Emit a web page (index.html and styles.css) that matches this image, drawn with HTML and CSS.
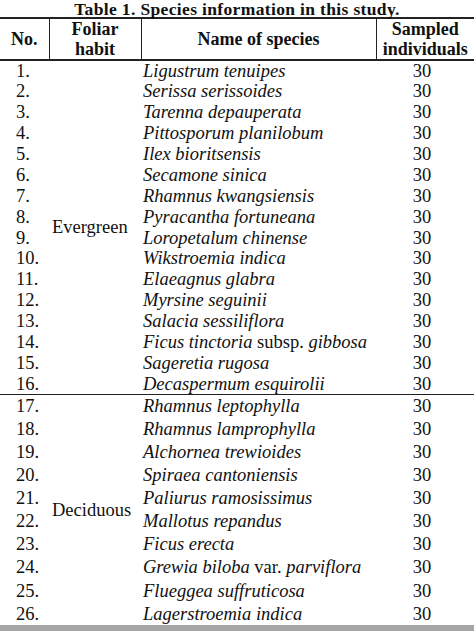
FILE: index.html
```html
<!DOCTYPE html>
<html>
<head>
<meta charset="utf-8">
<link rel="stylesheet" href="styles.css">
</head>
<body>
<div class="page">
  <div class="title">Table 1. Species information in this study.</div>
  <table class="tbl">
    <colgroup>
      <col class="c1"><col class="c2"><col class="c3"><col class="c4">
    </colgroup>
    <thead>
      <tr>
        <th class="h-no">No.</th>
        <th>Foliar<br>habit</th>
        <th>Name of species</th>
        <th class="h-last">Sampled<br>individuals</th>
      </tr>
    </thead>
    <tbody class="ever">
      <tr><td class="no">1.</td><td class="habit" rowspan="16">Evergreen</td><td class="sp"><i>Ligustrum tenuipes</i></td><td class="n">30</td></tr>
      <tr><td class="no">2.</td><td class="sp"><i>Serissa serissoides</i></td><td class="n">30</td></tr>
      <tr><td class="no">3.</td><td class="sp"><i>Tarenna depauperata</i></td><td class="n">30</td></tr>
      <tr><td class="no">4.</td><td class="sp"><i>Pittosporum planilobum</i></td><td class="n">30</td></tr>
      <tr><td class="no">5.</td><td class="sp"><i>Ilex bioritsensis</i></td><td class="n">30</td></tr>
      <tr><td class="no">6.</td><td class="sp"><i>Secamone sinica</i></td><td class="n">30</td></tr>
      <tr><td class="no">7.</td><td class="sp"><i>Rhamnus kwangsiensis</i></td><td class="n">30</td></tr>
      <tr><td class="no">8.</td><td class="sp"><i>Pyracantha fortuneana</i></td><td class="n">30</td></tr>
      <tr><td class="no">9.</td><td class="sp"><i>Loropetalum chinense</i></td><td class="n">30</td></tr>
      <tr><td class="no">10.</td><td class="sp"><i>Wikstroemia indica</i></td><td class="n">30</td></tr>
      <tr><td class="no">11.</td><td class="sp"><i>Elaeagnus glabra</i></td><td class="n">30</td></tr>
      <tr><td class="no">12.</td><td class="sp"><i>Myrsine seguinii</i></td><td class="n">30</td></tr>
      <tr><td class="no">13.</td><td class="sp"><i>Salacia sessiliflora</i></td><td class="n">30</td></tr>
      <tr><td class="no">14.</td><td class="sp"><i>Ficus tinctoria</i> subsp. <i>gibbosa</i></td><td class="n">30</td></tr>
      <tr><td class="no">15.</td><td class="sp"><i>Sageretia rugosa</i></td><td class="n">30</td></tr>
      <tr><td class="no">16.</td><td class="sp"><i>Decaspermum esquirolii</i></td><td class="n">30</td></tr>
    </tbody>
    <tbody class="deci">
      <tr><td class="no">17.</td><td class="habit" rowspan="10">Deciduous</td><td class="sp"><i>Rhamnus leptophylla</i></td><td class="n">30</td></tr>
      <tr><td class="no">18.</td><td class="sp"><i>Rhamnus lamprophylla</i></td><td class="n">30</td></tr>
      <tr><td class="no">19.</td><td class="sp"><i>Alchornea trewioides</i></td><td class="n">30</td></tr>
      <tr><td class="no">20.</td><td class="sp"><i>Spiraea cantoniensis</i></td><td class="n">30</td></tr>
      <tr><td class="no">21.</td><td class="sp"><i>Paliurus ramosissimus</i></td><td class="n">30</td></tr>
      <tr><td class="no">22.</td><td class="sp"><i>Mallotus repandus</i></td><td class="n">30</td></tr>
      <tr><td class="no">23.</td><td class="sp"><i>Ficus erecta</i></td><td class="n">30</td></tr>
      <tr><td class="no">24.</td><td class="sp"><i>Grewia biloba</i> var. <i>parviflora</i></td><td class="n">30</td></tr>
      <tr><td class="no">25.</td><td class="sp"><i>Flueggea suffruticosa</i></td><td class="n">30</td></tr>
      <tr><td class="no">26.</td><td class="sp"><i>Lagerstroemia indica</i></td><td class="n">30</td></tr>
    </tbody>
  </table>
  <div class="bottom-bar"></div>
</div>
</body>
</html>
```
FILE: styles.css
```css
html, body {
  margin: 0;
  padding: 0;
  background: #ffffff;
}
body {
  font-family: "Liberation Serif", "Times New Roman", serif;
  color: #111111;
  width: 474px;
  height: 631px;
  overflow: hidden;
}
.page {
  width: 474px;
}
.title {
  font-weight: bold;
  font-size: 17.5px;
  line-height: 19px;
  height: 17px;
  text-align: center;
  letter-spacing: 0.35px;
}
.tbl {
  width: 474px;
  border-collapse: collapse;
  table-layout: fixed;
  font-size: 18.5px;
}
.c1 { width: 49px; }
.c2 { width: 92px; }
.c3 { width: 235px; }
.c4 { width: 98px; }
.tbl th {
  font-weight: bold;
  font-size: 18px;
  line-height: 20px;
  height: 39px;
  padding: 0;
  text-align: center;
  vertical-align: middle;
  border-top: 2px solid #222222;
  border-bottom: 2px solid #222222;
  border-right: 1px solid #222222;
}
.tbl th.h-last {
  border-right: none;
}
.tbl td {
  padding: 0;
  line-height: 18px;
  white-space: nowrap;
}
.ever tr { height: 20.9px; }
.deci tr { height: 23.1px; }
.deci tr:first-child td {
  border-top: 1px solid #222222;
}
.no {
  padding-left: 16px !important;
  text-align: left;
}
.habit {
  text-align: left;
  padding-left: 3px !important;
  vertical-align: middle;
}
.sp {
  padding-left: 2px !important;
  text-align: left;
}
.n {
  text-align: center;
  padding-right: 6px !important;
}
.bottom-bar {
  height: 6px;
  background: #a6a6a6;
}
```
